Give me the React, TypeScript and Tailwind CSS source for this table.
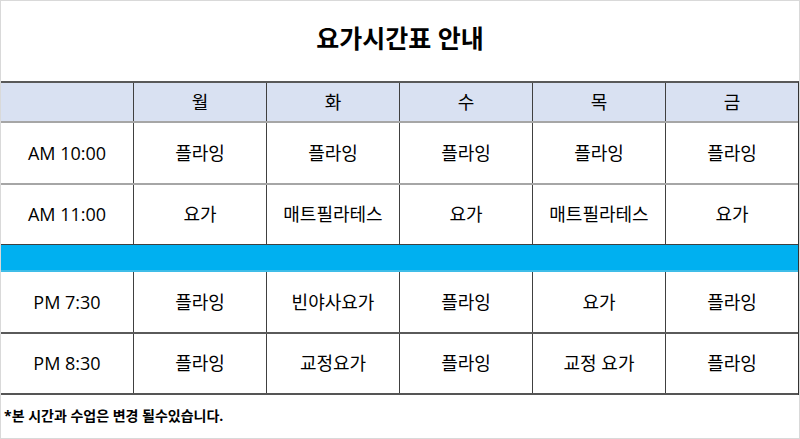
const days = ["월", "화", "수", "목", "금"];

const morning = [
  { time: "AM 10:00", classes: ["플라잉", "플라잉", "플라잉", "플라잉", "플라잉"], border: "border-b-2 border-[#a6a6a6]", h: "h-[60px]" },
  { time: "AM 11:00", classes: ["요가", "매트필라테스", "요가", "매트필라테스", "요가"], border: "border-b border-[#404040]", h: "h-[59px]" },
];

const evening = [
  { time: "PM 7:30", classes: ["플라잉", "빈야사요가", "플라잉", "요가", "플라잉"], border: "border-b-2 border-[#5a5a5a]", h: "h-[60px]" },
  { time: "PM 8:30", classes: ["플라잉", "교정요가", "플라잉", "교정 요가", "플라잉"], border: "border-b-2 border-[#555555]", h: "h-[59px]" },
];

function Row({ time, classes, border, h }: { time: string; classes: string[]; border: string; h: string }) {
  return (
    <div className={`grid grid-cols-[132px_repeat(5,133px)] ${border}`}>
      <div className={`${h} flex items-center justify-center`}>{time}</div>
      {classes.map((c, i) => (
        <div key={i} className={`${h} flex items-center justify-center border-l border-[#404040]`}>
          {c}
        </div>
      ))}
    </div>
  );
}

export default function App() {
  return (
    <div
      className="w-[800px] h-[439px] border border-[#d9d9d9] bg-white text-black flex flex-col"
      style={{ fontFamily: '"Open Sans", "Noto Sans CJK KR", sans-serif' }}
    >
      <div className="h-[80px] flex items-center justify-center text-[25px] font-bold pb-[4px]">
        요가시간표 안내
      </div>

      <div className="w-[798px] border-t-2 border-[#595959] border-r border-r-[#333333] text-[18px]">
        <div className="grid grid-cols-[132px_repeat(5,133px)] bg-[#d9e1f2] border-b-2 border-[#a6a6a6]">
          <div className="h-[38px]" />
          {days.map((d) => (
            <div key={d} className="h-[38px] flex items-center justify-center border-l border-[#404040]">
              {d}
            </div>
          ))}
        </div>

        {morning.map((r) => (
          <Row key={r.time} {...r} />
        ))}

        <div className="h-[27px] bg-[#00b0f0] border-b-2 border-[#3fbde8]" />

        {evening.map((r) => (
          <Row key={r.time} {...r} />
        ))}
      </div>

      <div className="flex-1 flex items-center pl-[3px] text-[14px] font-bold pb-[2px]">
        *본 시간과 수업은 변경 될수있습니다.
      </div>
    </div>
  );
}
